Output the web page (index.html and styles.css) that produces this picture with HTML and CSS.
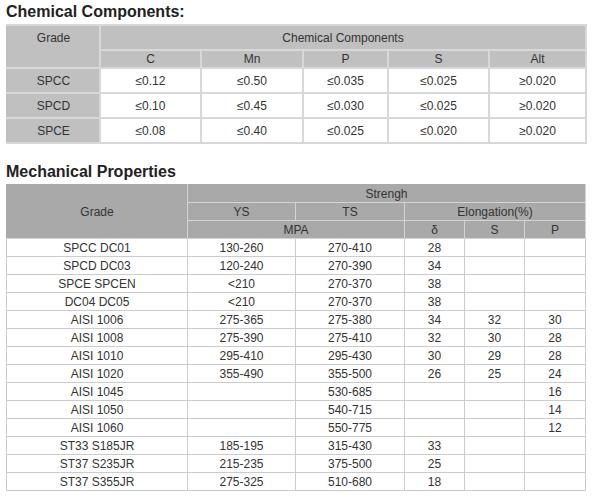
FILE: index.html
```html
<!DOCTYPE html>
<html>
<head>
<meta charset="utf-8">
<link rel="stylesheet" href="styles.css">
</head>
<body>
<div class="page">
  <h2 class="title title-chem">Chemical Components:</h2>
  <table class="chem">
    <colgroup>
      <col class="c-grade"><col class="c-c"><col class="c-mn"><col class="c-p"><col class="c-s"><col class="c-alt">
    </colgroup>
    <thead>
      <tr class="h1">
        <th rowspan="2" class="grade-head">Grade</th>
        <th colspan="5">Chemical Components</th>
      </tr>
      <tr class="h2">
        <th>C</th><th>Mn</th><th>P</th><th>S</th><th>Alt</th>
      </tr>
    </thead>
    <tbody>
      <tr><th>SPCC</th><td>≤0.12</td><td>≤0.50</td><td>≤0.035</td><td>≤0.025</td><td>≥0.020</td></tr>
      <tr><th>SPCD</th><td>≤0.10</td><td>≤0.45</td><td>≤0.030</td><td>≤0.025</td><td>≥0.020</td></tr>
      <tr><th>SPCE</th><td>≤0.08</td><td>≤0.40</td><td>≤0.025</td><td>≤0.020</td><td>≥0.020</td></tr>
    </tbody>
  </table>

  <h2 class="title title-mech">Mechanical Properties</h2>
  <table class="mech">
    <colgroup>
      <col class="m-grade"><col class="m-ys"><col class="m-ts"><col class="m-d"><col class="m-s"><col class="m-p">
    </colgroup>
    <thead>
      <tr>
        <th rowspan="3">Grade</th>
        <th colspan="5">Strengh</th>
      </tr>
      <tr>
        <th>YS</th><th>TS</th><th colspan="3">Elongation(%)</th>
      </tr>
      <tr>
        <th colspan="2">MPA</th><th>δ</th><th>S</th><th>P</th>
      </tr>
    </thead>
    <tbody>
      <tr><td>SPCC DC01</td><td>130-260</td><td>270-410</td><td>28</td><td></td><td></td></tr>
      <tr><td>SPCD DC03</td><td>120-240</td><td>270-390</td><td>34</td><td></td><td></td></tr>
      <tr><td>SPCE SPCEN</td><td>&lt;210</td><td>270-370</td><td>38</td><td></td><td></td></tr>
      <tr><td>DC04 DC05</td><td>&lt;210</td><td>270-370</td><td>38</td><td></td><td></td></tr>
      <tr><td>AISI 1006</td><td>275-365</td><td>275-380</td><td>34</td><td>32</td><td>30</td></tr>
      <tr><td>AISI 1008</td><td>275-390</td><td>275-410</td><td>32</td><td>30</td><td>28</td></tr>
      <tr><td>AISI 1010</td><td>295-410</td><td>295-430</td><td>30</td><td>29</td><td>28</td></tr>
      <tr><td>AISI 1020</td><td>355-490</td><td>355-500</td><td>26</td><td>25</td><td>24</td></tr>
      <tr><td>AISI 1045</td><td></td><td>530-685</td><td></td><td></td><td>16</td></tr>
      <tr><td>AISI 1050</td><td></td><td>540-715</td><td></td><td></td><td>14</td></tr>
      <tr><td>AISI 1060</td><td></td><td>550-775</td><td></td><td></td><td>12</td></tr>
      <tr><td>ST33 S185JR</td><td>185-195</td><td>315-430</td><td>33</td><td></td><td></td></tr>
      <tr><td>ST37 S235JR</td><td>215-235</td><td>375-500</td><td>25</td><td></td><td></td></tr>
      <tr><td>ST37 S355JR</td><td>275-325</td><td>510-680</td><td>18</td><td></td><td></td></tr>
    </tbody>
  </table>
</div>
</body>
</html>
```

FILE: styles.css
```css
html, body {
  margin: 0;
  padding: 0;
  background: #ffffff;
}

body {
  font-family: "Liberation Sans", Arial, sans-serif;
  color: #333333;
}

.page {
  padding: 0 9px 0 6px;
}

.title {
  font-size: 16px;
  font-weight: bold;
  color: #222222;
  margin: 0;
  line-height: 19px;
}

.title-chem {
  padding-top: 2px;
  height: 22px;
}

.title-mech {
  margin-top: 18px;
  height: 22px;
}

table {
  border-collapse: collapse;
  table-layout: fixed;
  width: 579px;
  font-size: 12px;
}

th, td {
  padding: 0;
  text-align: center;
  font-weight: normal;
  overflow: hidden;
  white-space: nowrap;
}

/* Chemical table */
.chem th, .chem td {
  border: 2px solid #d8d8d8;
}

.chem thead th, .chem tbody th {
  background: #c0c0c0;
}

.chem tbody td {
  background: #ffffff;
}

.chem .h1 th { height: 23px; }
.chem .h2 th { height: 16px; }
.chem tbody th, .chem tbody td { height: 23px; }

.chem .grade-head {
  vertical-align: top;
  padding-top: 5px;
}

.chem tr:first-child th:first-child,
.chem tbody th {
  border-left-color: #c0c0c0;
}

.c-grade { width: 93px; }
.c-c { width: 101px; }
.c-mn { width: 102px; }
.c-p { width: 85px; }
.c-s { width: 101px; }
.c-alt { width: 97px; }

/* Mechanical table */
.mech th, .mech td {
  border: 1px solid #cccccc;
}

.mech thead th {
  background: #a9a9a9;
  border-color: #d4d4d4;
  height: 17px;
}

.mech thead tr:first-child th:first-child {
  border-left-color: #a9a9a9;
  border-top-color: #a9a9a9;
}

.mech thead tr:first-child th {
  border-top-color: #a9a9a9;
}

.mech tbody td {
  height: 17px;
  background: #ffffff;
}

.m-grade { width: 181px; }
.m-ys { width: 108px; }
.m-ts { width: 109px; }
.m-d { width: 60px; }
.m-s { width: 60px; }
.m-p { width: 61px; }
```
